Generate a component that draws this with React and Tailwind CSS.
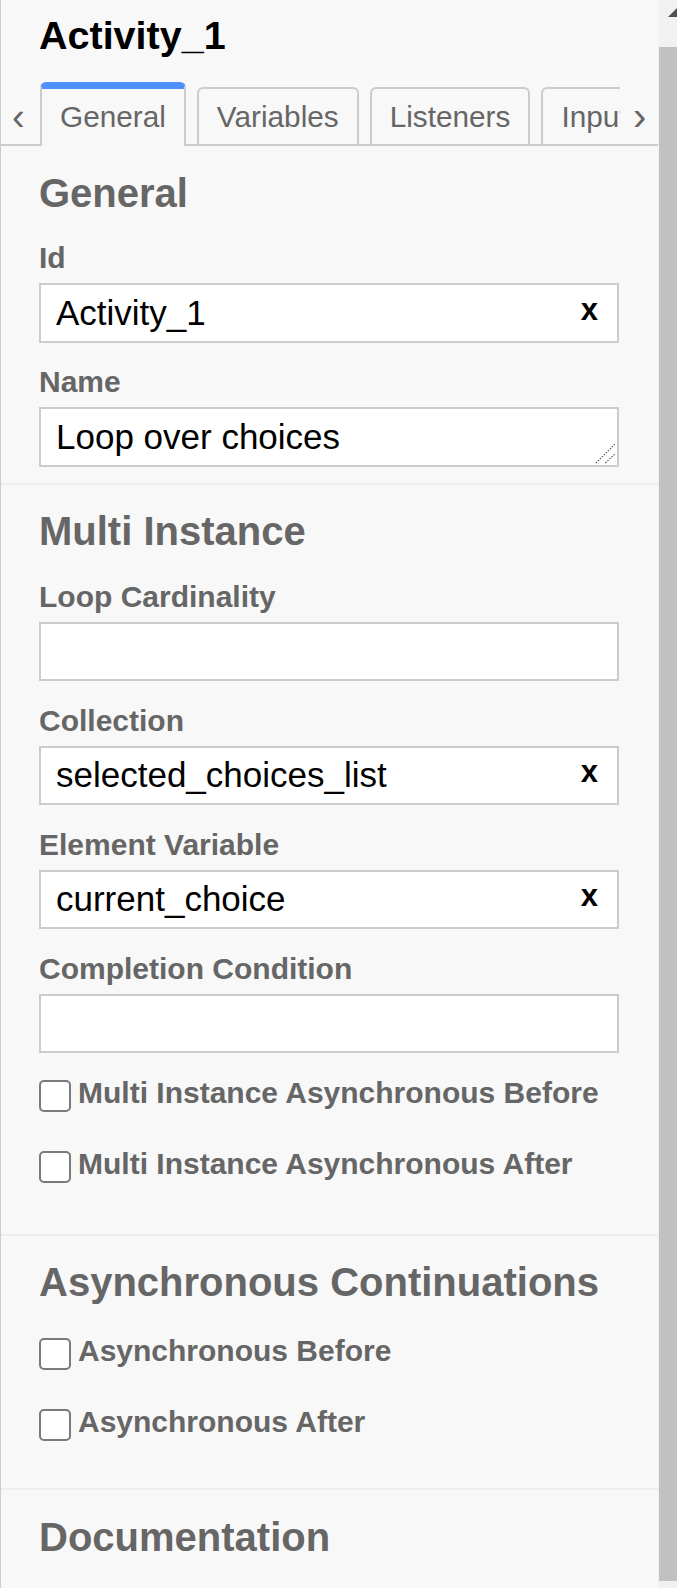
import React from "react";

function Field({ label, value, clear, area }) {
  return (
    <div className="mb-[22.5px]">
      <p className="text-[30px] leading-[34px] font-bold text-[#666] mb-[8px]">{label}</p>
      <div className="relative flex items-center h-[59.5px] w-[580px] border-2 border-[#ccc] bg-white pl-[15px] pr-[19px]">
        <span className="flex-1 text-[35px] leading-[40px] text-black whitespace-nowrap">{value}</span>
        {clear && (
          <span className="text-[31px] leading-[31px] font-bold text-black mb-[7px]">x</span>
        )}
        {area && (
          <svg className="absolute right-0 bottom-0" width="22" height="22" viewBox="0 0 22 22">
            <path d="M1 20 L20.4 0.6" stroke="#555" strokeWidth="1.2" strokeDasharray="1.4 1.4" />
            <path d="M10.4 20 L20.4 10.6" stroke="#555" strokeWidth="1.2" strokeDasharray="1.4 1.4" />
          </svg>
        )}
      </div>
    </div>
  );
}

function Check({ label }) {
  return (
    <div className="flex items-start gap-[7px]">
      <span className="mt-[4px] w-[32px] h-[32px] shrink-0 rounded-[5px] border-2 border-[#7a7a7a] bg-white"></span>
      <span className="text-[30px] leading-[34px] font-bold text-[#666] whitespace-nowrap">{label}</span>
    </div>
  );
}

function Header({ children, className = "" }) {
  return (
    <h2 className={`text-[40px] leading-[45px] font-bold text-[#666] whitespace-nowrap ${className}`}>
      {children}
    </h2>
  );
}

function Tab({ label }) {
  return (
    <div className="shrink-0 h-[57px] border-2 border-b-0 border-[#ccc] rounded-t-[6px] px-[18px] pt-[11px]">
      <span className="text-[29.75px] leading-[33px] text-[#666] whitespace-nowrap">{label}</span>
    </div>
  );
}

export default function App() {
  return (
    <div className="flex w-[677px] h-[1588px] overflow-hidden bg-[#f1f1f1] font-['Liberation_Sans',Arial,sans-serif]">
      <div className="w-[658px] shrink-0 border-l border-[#ccc] bg-[#f8f8f8] pt-[11px]">
        <h1 className="pl-[38px] text-[39.5px] leading-[48px] font-bold text-black">Activity_1</h1>

        {/* tabs */}
        <div className="flex items-end h-[64px] mt-[23px]">
          <div className="w-[39px] h-[64px] shrink-0 border-b-2 border-[#ccc] pl-[11px] pt-[14px]">
            <span className="text-[38px] leading-[42px] text-[#666]">‹</span>
          </div>
          <div className="flex items-end w-[580px] h-[64px] shrink-0 overflow-hidden">
            <div className="shrink-0 h-[64px] border-t-[7px] border-x-2 border-t-[#4d90fe] border-x-[#ccc] rounded-t-[6px] px-[18px] pt-[11px] bg-[#f8f8f8]">
              <span className="text-[29.75px] leading-[33px] text-[#666]">General</span>
            </div>
            <div className="flex items-end gap-[11px] pl-[11px] shrink-0 border-b-2 border-[#ccc]">
              <Tab label="Variables" />
              <Tab label="Listeners" />
              <Tab label="Input/Output" />
              <Tab label="Connector" />
            </div>
          </div>
          <div className="flex-1 h-[64px] border-b-2 border-[#ccc] pl-[13px] pt-[13px]">
            <span className="text-[40px] leading-[42px] text-[#666]">›</span>
          </div>
        </div>

        {/* General */}
        <section className="pl-[38px] pt-[24.5px] pb-[16px] border-b-2 border-[#eee]">
          <Header className="mb-[25.8px]">General</Header>
          <Field label="Id" value="Activity_1" clear />
          <div className="-mb-[22.5px]">
            <Field label="Name" value="Loop over choices" area />
          </div>
        </section>

        {/* Multi Instance */}
        <section className="pl-[38px] pt-[24.5px] pb-[51px] border-b-2 border-[#eee]">
          <Header className="mb-[25.4px]">Multi Instance</Header>
          <Field label="Loop Cardinality" value="" />
          <Field label="Collection" value="selected_choices_list" clear />
          <Field label="Element Variable" value="current_choice" clear />
          <Field label="Completion Condition" value="" />
          <div className="flex flex-col gap-[35px] mt-[9px]">
            <Check label="Multi Instance Asynchronous Before" />
            <Check label="Multi Instance Asynchronous After" />
          </div>
        </section>

        {/* Asynchronous Continuations */}
        <section className="pl-[38px] pt-[24.5px] pb-[47px] border-b-2 border-[#eee]">
          <Header className="mb-[29px]">Asynchronous Continuations</Header>
          <div className="flex flex-col gap-[35px]">
            <Check label="Asynchronous Before" />
            <Check label="Asynchronous After" />
          </div>
        </section>

        {/* Documentation */}
        <section className="pl-[38px] pt-[24.5px]">
          <Header>Documentation</Header>
        </section>
      </div>

      {/* scrollbar */}
      <div className="flex-1 flex flex-col bg-[#f1f1f1]">
        <div className="h-[47px] shrink-0">
          <svg width="19" height="20" viewBox="0 0 19 20" className="block">
            <polygon points="10,17 19,8 19,17" fill="#505050" />
          </svg>
        </div>
        <div className="ml-[1px] h-[1534px] shrink-0 bg-[#c1c1c1]"></div>
      </div>
    </div>
  );
}
